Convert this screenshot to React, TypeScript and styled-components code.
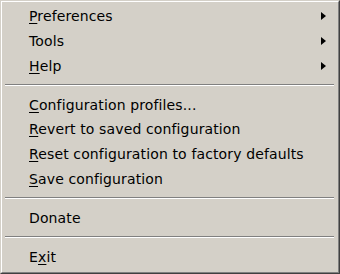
import styled, { createGlobalStyle } from "styled-components";

const GlobalStyle = createGlobalStyle`
  html, body {
    margin: 0;
    padding: 0;
    background: #d4d0c8;
  }
`;

type Entry =
  | { kind: "item"; label: string; key: number | null; submenu?: boolean }
  | { kind: "sep" };

const entries: Entry[] = [
  { kind: "item", label: "Preferences", key: 0, submenu: true },
  { kind: "item", label: "Tools", key: null, submenu: true },
  { kind: "item", label: "Help", key: 0, submenu: true },
  { kind: "sep" },
  { kind: "item", label: "Configuration profiles...", key: 0 },
  { kind: "item", label: "Revert to saved configuration", key: 0 },
  { kind: "item", label: "Reset configuration to factory defaults", key: 0 },
  { kind: "item", label: "Save configuration", key: 0 },
  { kind: "sep" },
  { kind: "item", label: "Donate", key: null },
  { kind: "sep" },
  { kind: "item", label: "Exit", key: 1 },
];

const Menu = styled.div`
  box-sizing: border-box;
  width: 340px;
  height: 274px;
  background: #d4d0c8;
  border-top: 1px solid #d4d0c8;
  border-left: 1px solid #d4d0c8;
  border-right: 1px solid #404040;
  border-bottom: 1px solid #404040;
  font-family: "DejaVu Sans", "Liberation Sans", sans-serif;
  font-size: 14px;
  letter-spacing: 0.13px;
  color: #000;
`;

const Inner = styled.div`
  box-sizing: border-box;
  height: 100%;
  border-top: 1px solid #ffffff;
  border-left: 1px solid #ffffff;
  border-right: 1px solid #808080;
  border-bottom: 1px solid #808080;
  padding: 2px 2px 3px 2px;
  display: flex;
  flex-direction: column;
`;

const Row = styled.div`
  height: 24.85px;
  display: flex;
  align-items: center;
  padding-left: 25px;
  padding-right: 10px;
`;

const Label = styled.span`
  flex: 1;
  white-space: nowrap;
`;

const Key = styled.span`
  text-decoration: underline;
  text-underline-offset: 2px;
`;

const Arrow = styled.span`
  width: 0;
  height: 0;
  border-top: 4px solid transparent;
  border-bottom: 4px solid transparent;
  border-left: 5px solid #000;
`;

const Separator = styled.div`
  height: 14px;
  display: flex;
  flex-direction: column;
  justify-content: center;
  padding: 0 2px 0 1px;

  &::before {
    content: "";
    display: block;
    height: 1px;
    background: #808080;
  }
  &::after {
    content: "";
    display: block;
    height: 1px;
    background: #ffffff;
  }
`;

const renderLabel = (label: string, key: number | null) => {
  if (key === null) return label;
  return (
    <>
      {label.slice(0, key)}
      <Key>{label[key]}</Key>
      {label.slice(key + 1)}
    </>
  );
};

const App = () => {
  return (
    <>
      <GlobalStyle />
      <Menu>
        <Inner>
          {entries.map((e, i) =>
            e.kind === "sep" ? (
              <Separator key={i} />
            ) : (
              <Row key={i}>
                <Label>{renderLabel(e.label, e.key)}</Label>
                {e.submenu && <Arrow />}
              </Row>
            )
          )}
        </Inner>
      </Menu>
    </>
  );
};

export default App;
